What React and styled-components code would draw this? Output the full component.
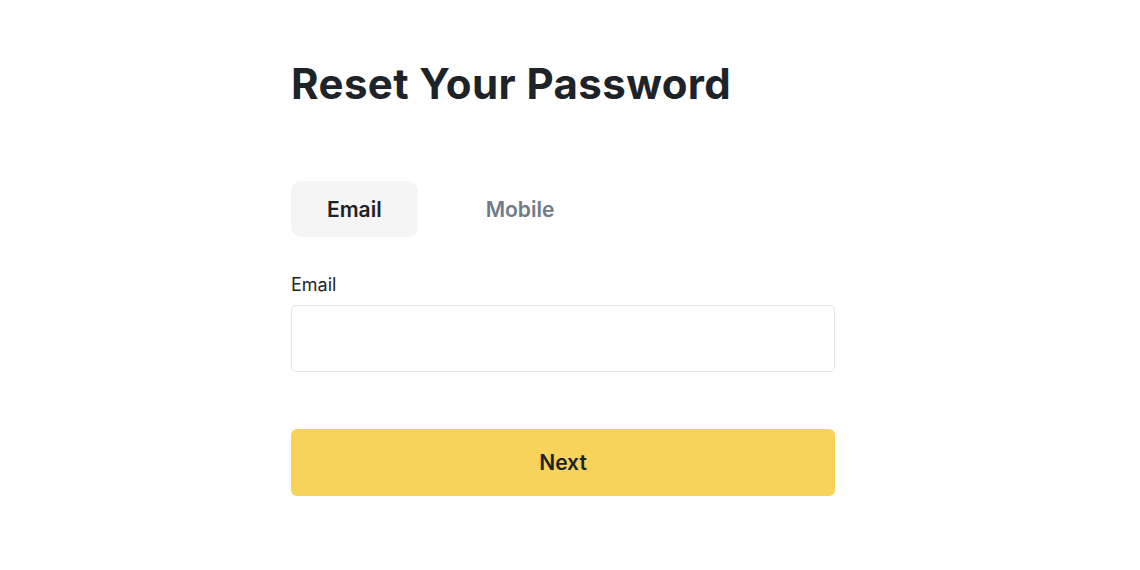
import React, { useState } from 'react'
import styled, { createGlobalStyle } from 'styled-components'

const GlobalStyle = createGlobalStyle`
  html, body {
    margin: 0;
    padding: 0;
    background: #ffffff;
  }
  body {
    font-family: 'Inter', 'Noto Sans', sans-serif;
    color: #1e2329;
  }
  * {
    box-sizing: border-box;
  }
`

const Page = styled.div`
  width: 100%;
  min-height: 570px;
  padding-left: 291px;
`

const Form = styled.div`
  width: 544px;
  display: flex;
  flex-direction: column;
  padding-top: 57px;
`

const Title = styled.h1`
  margin: 0;
  font-size: 42px;
  line-height: 54px;
  font-weight: 700;
  letter-spacing: 0.4px;
  color: #1e2329;
`

const Tabs = styled.div`
  display: flex;
  gap: 32px;
  margin-top: 70px;
`

const Tab = styled.button`
  height: 56px;
  padding: 0 36px;
  border: none;
  border-radius: 10px;
  font-family: inherit;
  font-size: 21px;
  font-weight: 600;
  cursor: pointer;
  background: ${p => (p.$active ? '#f5f5f5' : 'transparent')};
  color: ${p => (p.$active ? '#1e2329' : '#707a8a')};
`

const Label = styled.label`
  margin-top: 36px;
  font-size: 18px;
  line-height: 24px;
  color: #1e2329;
`

const Input = styled.input`
  margin-top: 8px;
  height: 67px;
  width: 100%;
  border: 1px solid #e1e4e8;
  border-radius: 5px;
  padding: 0 16px;
  font-family: inherit;
  font-size: 18px;
  outline: none;
`

const NextButton = styled.button`
  margin-top: 57px;
  height: 67px;
  width: 100%;
  border: none;
  border-radius: 6px;
  background: #f7d35a;
  font-family: inherit;
  font-size: 21px;
  font-weight: 600;
  color: #1e2329;
  cursor: pointer;
`

export default function App() {
  const [tab, setTab] = useState('email')

  return (
    <Page>
      <GlobalStyle />
      <Form>
        <Title>Reset Your Password</Title>
        <Tabs>
          <Tab $active={tab === 'email'} onClick={() => setTab('email')}>
            Email
          </Tab>
          <Tab $active={tab === 'mobile'} onClick={() => setTab('mobile')}>
            Mobile
          </Tab>
        </Tabs>
        <Label htmlFor="email">Email</Label>
        <Input id="email" type="email" />
        <NextButton>Next</NextButton>
      </Form>
    </Page>
  )
}
